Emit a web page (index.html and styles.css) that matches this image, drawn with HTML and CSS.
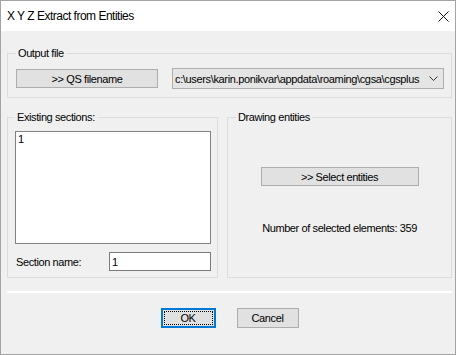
FILE: index.html
```html
<!DOCTYPE html>
<html lang="en">
<head>
    <meta charset="UTF-8">
    <title>X Y Z Extract from Entities</title>
    <link rel="stylesheet" href="styles.css">
</head>
<body>

<div class="window">
    <div class="titlebar">
        <span class="title">X Y Z Extract from Entities</span>
        <svg class="close" width="11" height="11" viewBox="0 0 11 11">
            <path d="M0.5 0.5 L10.5 10.5 M10.5 0.5 L0.5 10.5" stroke="#111" stroke-width="1" fill="none"/>
        </svg>
    </div>

    <div class="client">
        <fieldset class="group output">
            <legend>Output file</legend>
            <div class="file-row">
                <button class="btn qs-btn">&gt;&gt; QS filename</button>
                <div class="combo">
                    <span class="combo-text">c:\users\karin.ponikvar\appdata\roaming\cgsa\cgsplus</span>
                    <svg class="chevron" width="9" height="5" viewBox="0 0 9 5">
                        <path d="M0.5 0.5 L4.5 4.5 L8.5 0.5" stroke="#333" stroke-width="1" fill="none"/>
                    </svg>
                </div>
            </div>
        </fieldset>

        <div class="groups">
            <fieldset class="group sections">
                <legend>Existing sections:</legend>
                <div class="listbox">
                    <div class="list-item">1</div>
                </div>
                <div class="name-row">
                    <label for="section-name">Section name:</label>
                    <input id="section-name" class="name-input" type="text" value="1">
                </div>
            </fieldset>

            <fieldset class="group entities">
                <legend>Drawing entities</legend>
                <button class="btn select-btn">&gt;&gt; Select entities</button>
                <div class="count">Number of selected elements: 359</div>
            </fieldset>
        </div>

        <div class="separator"></div>

        <div class="actions">
            <button class="btn ok-btn">OK</button>
            <button class="btn cancel-btn">Cancel</button>
        </div>
    </div>
</div>

</body>
</html>
```

FILE: styles.css
```css
body {
    margin: 0;
    font-family: "Liberation Sans", Arial, sans-serif;
    font-size: 11px;
    letter-spacing: -0.4px;
    color: #000;
}

.window {
    width: 456px;
    height: 355px;
    box-sizing: border-box;
    border: 1px solid #a3a3a3;
    background-color: #f0f0f0;
    display: flex;
    flex-direction: column;
}

.titlebar {
    height: 30px;
    background-color: #fff;
    display: flex;
    align-items: center;
    justify-content: space-between;
    padding-left: 6px;
}

.title {
    font-size: 12px;
    letter-spacing: -0.5px;
}

.close {
    margin-right: 6px;
}

.client {
    flex: 1;
    padding: 16px 3px 0 6px;
    display: flex;
    flex-direction: column;
}

.group {
    margin: 0;
    border: 1px solid #dcdcdc;
    min-width: 0;
}

.group legend {
    padding: 0 2px;
    line-height: 13px;
}

.output {
    padding: 8px 7px 8px 8px;
}

.file-row {
    display: flex;
    align-items: center;
    gap: 14px;
}

.btn {
    font-family: "Liberation Sans", Arial, sans-serif;
    font-size: 11px;
    letter-spacing: -0.4px;
    color: #000;
    background-color: #e1e1e1;
    border: 1px solid #adadad;
    padding: 0;
    height: 19px;
    white-space: nowrap;
}

.qs-btn {
    flex: none;
    width: 142px;
}

.combo {
    flex: 1;
    min-width: 0;
    height: 21px;
    box-sizing: border-box;
    background-color: #e5e5e5;
    border: 1px solid #adadad;
    display: flex;
    align-items: center;
    padding: 0 5px 0 2px;
}

.combo-text {
    flex: 1;
    overflow: hidden;
    white-space: nowrap;
    letter-spacing: -0.35px;
}

.chevron {
    flex: none;
    margin-left: 4px;
}

.groups {
    display: flex;
    gap: 9px;
    margin-top: 13px;
}

.sections {
    width: 211px;
    box-sizing: border-box;
    padding: 7px 6px 6px 7px;
}

.listbox {
    height: 113px;
    box-sizing: border-box;
    background-color: #fff;
    border: 1px solid #828282;
}

.list-item {
    padding: 1px 2px;
    line-height: 13px;
}

.name-row {
    display: flex;
    align-items: center;
    justify-content: space-between;
    margin-top: 8px;
}

.name-row label {
    margin-left: 1px;
}

.name-input {
    width: 102px;
    height: 19px;
    box-sizing: border-box;
    border: 1px solid #7a7a7a;
    padding: 0 2px;
    font-family: "Liberation Sans", Arial, sans-serif;
    font-size: 11px;
    outline: none;
}

.entities {
    flex: 1;
    padding: 0 8px;
    display: flex;
    flex-direction: column;
    align-items: center;
}

.select-btn {
    width: 158px;
    margin-top: 43px;
}

.count {
    margin-top: 36px;
    line-height: 13px;
}

.separator {
    height: 2px;
    background-color: #fff;
    margin-top: 13px;
}

.actions {
    display: flex;
    justify-content: center;
    gap: 21px;
    margin-top: 15px;
}

.actions .btn {
    height: 20px;
}

.ok-btn {
    width: 55px;
    border: 2px solid #0078d7;
    outline: 1px dotted #000;
    outline-offset: -4px;
}

.cancel-btn {
    width: 62px;
}
```
